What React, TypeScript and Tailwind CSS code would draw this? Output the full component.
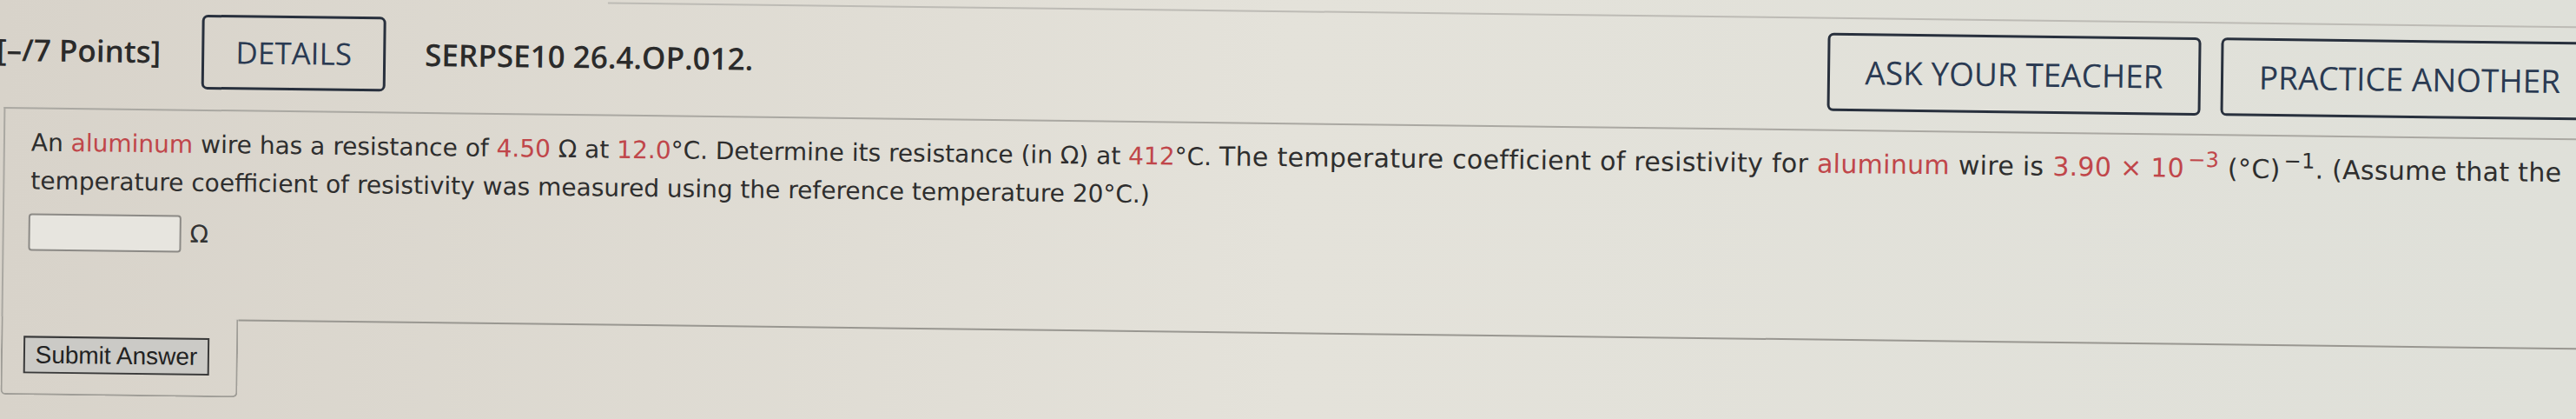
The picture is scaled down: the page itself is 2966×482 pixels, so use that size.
const Red = ({ children }: { children: React.ReactNode }) => (
  <span className="text-[#c0464a]">{children}</span>
);

const HeaderButton = ({ label, w, h, size }: { label: string; w: string; h: string; size: string }) => (
  <div
    className={`${w} ${h} ${size} flex items-center justify-center border-[3px] border-[#28303d] rounded-[7px] text-[#2a3a52]`}
  >
    {label}
  </div>
);

export default function App() {
  return (
    <div className="w-[2966px] h-[482px] overflow-hidden bg-linear-to-r from-[#d8d3ca] via-[#e4e2da] to-[#dfe0d9] text-[#2e2e2e]">
      <div className="w-[3000px] origin-top-left rotate-[0.7deg] -mt-[6px]">
        <div className="h-[2px] ml-[700px] bg-[#bdbbb5]" />

        <header className="h-[122px] flex items-center justify-between font-['Open_Sans',sans-serif]">
          <div className="flex items-center">
            <span className="-ml-[3px] text-[35px] font-semibold text-[#2b2b2b]">[–/7 Points]</span>
            <div className="ml-[47px]">
              <HeaderButton label="DETAILS" w="w-[212px]" h="h-[86px]" size="text-[35px]" />
            </div>
            <span className="ml-[45px] text-[35px] font-semibold text-[#2b2b2b]">SERPSE10 26.4.OP.012.</span>
          </div>
          <div className="flex items-center gap-[23px] pr-[7px]">
            <HeaderButton label="ASK YOUR TEACHER" w="w-[430px]" h="h-[90px]" size="text-[37px]" />
            <HeaderButton label="PRACTICE ANOTHER" w="w-[435px]" h="h-[90px]" size="text-[37px]" />
          </div>
        </header>

        <div className="mt-[5px] ml-[6px] border-l-2 border-t-2 border-[#aaa8a2] pl-[30px] pt-[16px] pb-[76px]">
          <div className="font-['DejaVu_Sans',sans-serif] text-[28px] leading-[44px] whitespace-nowrap">
            An <Red>aluminum</Red> wire has a resistance of <Red>4.50</Red> Ω at <Red>12.0</Red>°C. Determine its
            resistance (in Ω) at <Red>412</Red>°C.{" "}
            <span className="text-[30px] tracking-[0.3px]">
              The temperature coefficient of resistivity for <Red>aluminum</Red> wire is{" "}
              <Red>
                3.90 × 10<sup className="ml-[4px] text-[24px]">−3</sup>
              </Red>{" "}
              (°C)<sup className="ml-[4px] text-[24px]">−1</sup>. (Assume that the
            </span>
            <br />
            temperature coefficient of resistivity was measured using the reference temperature 20°C.)
          </div>
          <div className="mt-[15px] flex items-center">
            <div className="-ml-[2px] w-[176px] h-[43px] border-2 border-[#8c8a86] rounded-[4px] bg-[#e7e5df]" />
            <span className="ml-[10px] font-['DejaVu_Sans',sans-serif] text-[28px] text-[#333]">Ω</span>
          </div>
        </div>

        <div className="flex">
          <div className="ml-[6px] w-[273px] h-[90px] border-l-2 border-r-2 border-b-2 border-[#9f9d97] rounded-b-[6px] pl-[24px] pt-[22px]">
            <button className="w-[214px] h-[43px] flex items-center justify-center border-2 border-[#3a3a3a] bg-[#cbcac6] font-['Liberation_Sans',sans-serif] text-[28px] text-[#222]">
              Submit Answer
            </button>
          </div>
          <div className="flex-1 border-t-2 border-[#999791]" />
        </div>
      </div>
    </div>
  );
}
